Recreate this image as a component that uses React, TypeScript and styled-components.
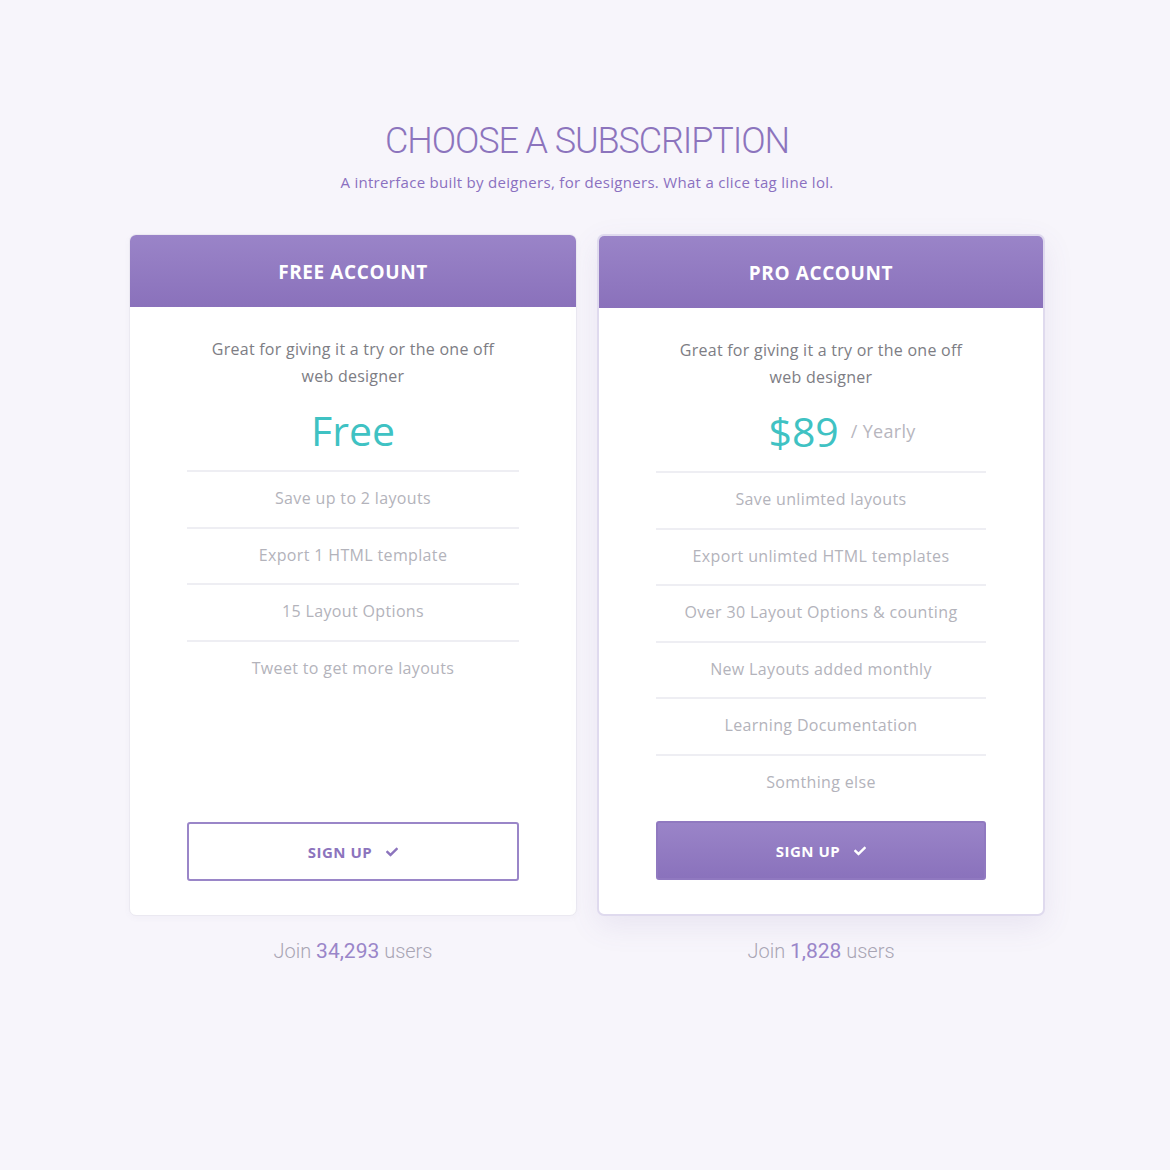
import styled, { createGlobalStyle } from 'styled-components';
import { FaCheck } from 'react-icons/fa';

const GlobalStyle = createGlobalStyle`
  html, body {
    margin: 0;
    padding: 0;
    background: #f7f5fb;
  }
  * {
    box-sizing: border-box;
  }
`;

type Plan = {
  name: string;
  price: string;
  period?: string;
  features: string[];
  users: string;
  pro?: boolean;
};

const plans: Plan[] = [
  {
    name: 'FREE ACCOUNT',
    price: 'Free',
    features: [
      'Save up to 2 layouts',
      'Export 1 HTML template',
      '15 Layout Options',
      'Tweet to get more layouts',
    ],
    users: '34,293',
  },
  {
    name: 'PRO ACCOUNT',
    price: '$89',
    period: '/ Yearly',
    features: [
      'Save unlimted layouts',
      'Export unlimted HTML templates',
      'Over 30 Layout Options & counting',
      'New Layouts added monthly',
      'Learning Documentation',
      'Somthing else',
    ],
    users: '1,828',
    pro: true,
  },
];

const App = () => {
  return (
    <>
      <GlobalStyle />
      <Page>
        <Title>CHOOSE A SUBSCRIPTION</Title>
        <Subtitle>A intrerface built by deigners, for designers. What a clice tag line lol.</Subtitle>
        <Plans>
          {plans.map((plan) => (
            <Column key={plan.name}>
              <Card $pro={plan.pro}>
                <CardHeader>{plan.name}</CardHeader>
                <CardBody>
                  <Description>
                    Great for giving it a try or the one off
                    <br />
                    web designer
                  </Description>
                  <PriceRow $shift={!!plan.period}>
                    <Price>{plan.price}</Price>
                    {plan.period && <Period>{plan.period}</Period>}
                  </PriceRow>
                  <Features>
                    {plan.features.map((f) => (
                      <Feature key={f}>{f}</Feature>
                    ))}
                  </Features>
                  <SignUp $filled={plan.pro}>
                    SIGN UP <FaCheck size={12} />
                  </SignUp>
                </CardBody>
              </Card>
              <Join>
                Join <strong>{plan.users}</strong> users
              </Join>
            </Column>
          ))}
        </Plans>
      </Page>
    </>
  );
};

const Page = styled.div`
  min-height: 1170px;
  display: flex;
  flex-direction: column;
  align-items: center;
  padding: 118px 0 0 4px;
  background: #f7f5fb;
`;

const Title = styled.h1`
  margin: 0;
  font-family: Roboto, 'Liberation Sans', sans-serif;
  font-weight: 300;
  font-size: 36px;
  line-height: 46px;
  letter-spacing: -1.1px;
  color: #8c74bd;
`;

const Subtitle = styled.p`
  margin: 8px 0 0;
  font-family: 'Open Sans', 'Liberation Sans', sans-serif;
  font-size: 15px;
  line-height: 20px;
  letter-spacing: 0.3px;
  color: #8a70c0;
`;

const Plans = styled.div`
  display: grid;
  grid-template-columns: 448px 448px;
  gap: 20px;
  margin-top: 42px;
`;

const Column = styled.div`
  display: flex;
  flex-direction: column;
`;

const Card = styled.div<{ $pro?: boolean }>`
  height: 682px;
  display: flex;
  flex-direction: column;
  background: #fff;
  border-radius: 7px;
  border: ${(p) => (p.$pro ? '2px solid #dfdaee' : '1px solid #ebe9f1')};
  box-shadow: ${(p) =>
    p.$pro ? '0 10px 30px rgba(110, 90, 160, 0.1)' : '0 2px 6px rgba(110, 90, 160, 0.04)'};
  overflow: hidden;
`;

const CardHeader = styled.div`
  height: 72px;
  flex-shrink: 0;
  display: flex;
  align-items: center;
  justify-content: center;
  padding-top: 2px;
  background: linear-gradient(180deg, #9a84c8 0%, #8a71bb 100%);
  color: #fff;
  font-family: 'Open Sans', 'Liberation Sans', sans-serif;
  font-weight: 700;
  font-size: 19px;
  letter-spacing: 0.6px;
`;

const CardBody = styled.div`
  flex: 1;
  display: flex;
  flex-direction: column;
  padding: 29px 57px 34px;
`;

const Description = styled.p`
  margin: 0;
  text-align: center;
  font-family: 'Open Sans', 'Liberation Sans', sans-serif;
  font-size: 16px;
  line-height: 27px;
  letter-spacing: 0.25px;
  color: #7d7d84;
`;

const PriceRow = styled.div<{ $shift?: boolean }>`
  display: flex;
  align-items: center;
  justify-content: center;
  gap: 12px;
  margin-top: 16px;
  height: 48px;
  padding-left: ${(p) => (p.$shift ? '42px' : '0')};
`;

const Price = styled.span`
  font-family: 'Open Sans', 'Liberation Sans', sans-serif;
  font-size: 41px;
  line-height: 48px;
  color: #3fc2c3;
`;

const Period = styled.span`
  font-family: 'Open Sans', 'Liberation Sans', sans-serif;
  font-size: 18px;
  letter-spacing: 0.3px;
  color: #b7b6be;
`;

const Features = styled.ul`
  list-style: none;
  margin: 16px 0 0;
  padding: 0;
`;

const Feature = styled.li`
  height: 56.5px;
  display: flex;
  align-items: center;
  justify-content: center;
  padding-bottom: 2px;
  border-top: 2px solid #eeeef3;
  font-family: 'Open Sans', 'Liberation Sans', sans-serif;
  font-size: 16px;
  letter-spacing: 0.35px;
  color: #b3b3bb;
`;

const SignUp = styled.button<{ $filled?: boolean }>`
  margin-top: auto;
  height: 59px;
  flex-shrink: 0;
  display: flex;
  align-items: center;
  justify-content: center;
  gap: 14px;
  border-radius: 3px;
  cursor: pointer;
  font-family: 'Open Sans', 'Liberation Sans', sans-serif;
  font-weight: 700;
  font-size: 15px;
  letter-spacing: 0.5px;
  border: 2px solid ${(p) => (p.$filled ? '#9079c0' : '#9a86c8')};
  color: ${(p) => (p.$filled ? '#fff' : '#8c74bd')};
  background: ${(p) =>
    p.$filled ? 'linear-gradient(180deg, #9a84c8 0%, #8a72bc 100%)' : '#fff'};
`;

const Join = styled.div`
  margin-top: 23px;
  text-align: center;
  font-family: Roboto, 'Liberation Sans', sans-serif;
  font-weight: 300;
  font-size: 20px;
  color: #a9a5b4;

  strong {
    font-weight: 400;
    font-size: 21px;
    color: #9a86c9;
  }
`;

export default App;
